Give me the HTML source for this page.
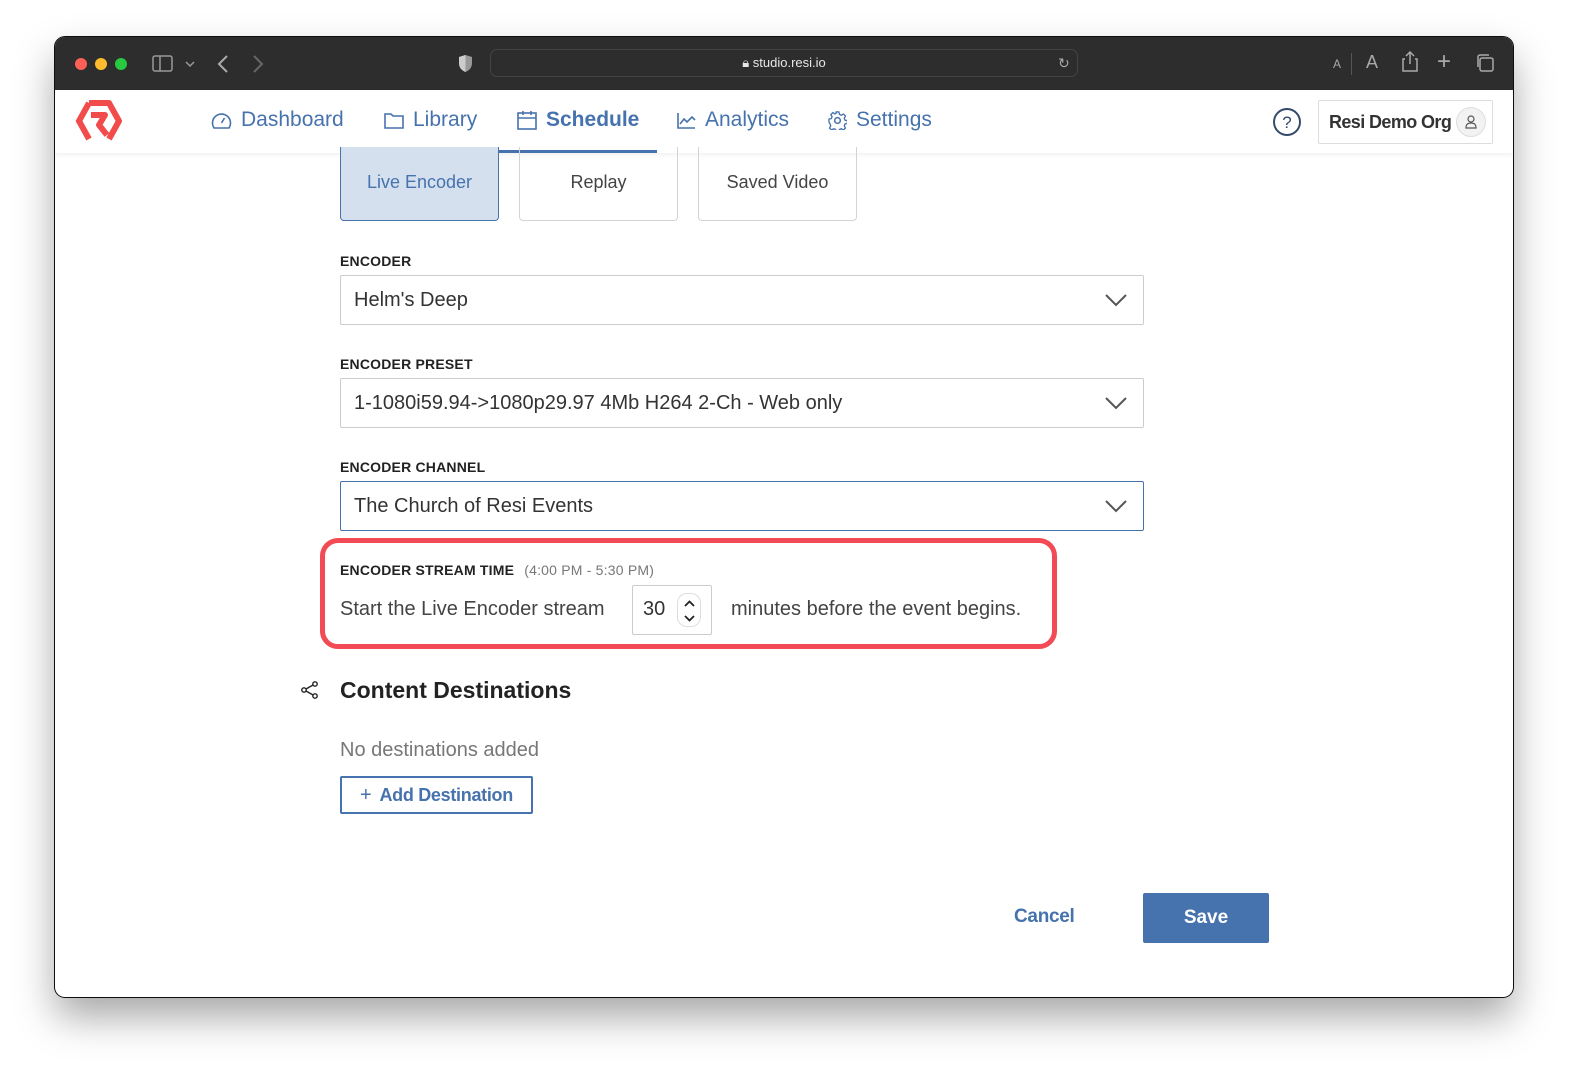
<!DOCTYPE html>
<html><head><meta charset="utf-8"><style>
*{box-sizing:border-box;margin:0;padding:0}
body{width:1580px;height:1078px;background:#fff;font-family:"Liberation Sans",sans-serif;position:relative;overflow:hidden}
.win{position:absolute;left:55px;top:37px;width:1458px;height:960px;border-radius:10px;background:#fff;overflow:hidden;box-shadow:0 20px 40px rgba(0,0,0,.35),0 0 0 1px #111}
.tb{position:absolute;left:0;top:0;width:100%;height:53px;background:#2d2d2d}
.a{position:absolute}
.dot{position:absolute;top:21px;width:12px;height:12px;border-radius:50%}
.url{position:absolute;left:435px;top:12px;width:588px;height:28px;border:1px solid #444;border-radius:7px;background:#2d2d2d;color:#e8e8e8;font-size:13px;text-align:center;line-height:26px}
.nav{position:absolute;left:0;top:53px;width:100%;height:63px;background:#fff;box-shadow:0 2px 4px rgba(0,0,0,.06)}
.ni{position:absolute;top:18px;font-size:21px;color:#4672ad;display:flex;align-items:center;gap:9px}
.lbl{position:absolute;font-size:14px;font-weight:bold;color:#222;letter-spacing:.2px}
.sel{position:absolute;left:285px;width:804px;height:50px;border:1px solid #ccc;border-radius:2px;font-size:20px;color:#333;padding-left:13px;line-height:48px}
.chev{position:absolute;right:16px;top:17px}
.tab{position:absolute;top:110px;width:159px;height:74px;border:1px solid #d3d3d3;border-top:none;border-radius:0 0 4px 4px;font-size:18px;color:#444;text-align:center;padding-top:25px}
</style></head><body>
<div class="win">
<div class="tb">
<div class="dot" style="left:20px;background:#fe5f57"></div>
<div class="dot" style="left:40px;background:#febc2e"></div>
<div class="dot" style="left:60px;background:#28c840"></div>
<svg class="a" style="left:97px;top:18px" width="22" height="18"><rect x="1" y="1" width="19" height="15" rx="2" fill="none" stroke="#999" stroke-width="1.5"/><line x1="8" y1="1" x2="8" y2="16" stroke="#999" stroke-width="1.5"/></svg>
<svg class="a" style="left:130px;top:24px" width="10" height="7"><path d="M1 1l4 4 4-4" stroke="#999" fill="none" stroke-width="1.5"/></svg>
<svg class="a" style="left:162px;top:17px" width="12" height="20"><path d="M10 2L2 10l8 8" stroke="#aaa" fill="none" stroke-width="2"/></svg>
<svg class="a" style="left:197px;top:17px" width="12" height="20"><path d="M2 2l8 8-8 8" stroke="#666" fill="none" stroke-width="2"/></svg>
<svg class="a" style="left:403px;top:17px" width="15" height="19"><path d="M7.5 1L14 3v6c0 5-3 7.5-6.5 9C4 16.5 1 14 1 9V3z" fill="#999"/><path d="M7.5 1v17C4 16.5 1 14 1 9V3z" fill="#ccc"/></svg>
<div class="url">🔒&#xFE0E; studio.resi.io</div>
<div class="a" style="left:1003px;top:18px;color:#aaa;font-size:14px">↻</div>
<div class="a" style="left:1278px;top:20px;color:#aaa;font-size:12px">A</div>
<div class="a" style="left:1296px;top:16px;width:1px;height:22px;background:#555"></div>
<div class="a" style="left:1311px;top:15px;color:#aaa;font-size:18px">A</div>
<svg class="a" style="left:1346px;top:14px" width="18" height="22"><path d="M4 8H2v12h14V8h-2M9 1v12M5 5l4-4 4 4" stroke="#aaa" fill="none" stroke-width="1.5"/></svg>
<div class="a" style="left:1382px;top:11px;color:#aaa;font-size:24px;font-weight:300">+</div>
<svg class="a" style="left:1420px;top:16px" width="20" height="20"><rect x="5" y="5" width="13" height="13" rx="2" fill="none" stroke="#aaa" stroke-width="1.5"/><path d="M3 14V4a2 2 0 0 1 2-2h9" stroke="#aaa" fill="none" stroke-width="1.5"/></svg>
</div>
<div class="nav">
<svg class="a" style="left:20px;top:9px" width="48" height="44" viewBox="0 0 48 44"><path d="M14 4h20l10 18-10 18" stroke="#f24b4b" stroke-width="6" fill="none" stroke-linejoin="round"/><path d="M14 4L4 22l10 18" stroke="#f24b4b" stroke-width="6" fill="none"/><path d="M16 16h14l-6 10 8 10" stroke="#f24b4b" stroke-width="6" fill="none" stroke-linejoin="round"/></svg>
<div class="ni" style="left:156px"><svg width="21" height="19" viewBox="0 0 21 19"><path d="M3 17A9 9 0 1 1 18 17z" fill="none" stroke="#4672ad" stroke-width="1.6"/><path d="M10.5 12l3-5" stroke="#4672ad" stroke-width="1.6"/></svg>Dashboard</div>
<div class="ni" style="left:329px"><svg width="20" height="17"><path d="M1 2h6l2 2h10v12H1z" fill="none" stroke="#4672ad" stroke-width="1.6"/></svg>Library</div>
<div class="ni" style="left:462px;font-weight:bold"><svg width="20" height="20"><rect x="1" y="3" width="18" height="16" fill="none" stroke="#4672ad" stroke-width="1.6"/><path d="M1 8h18M6 1v4M14 1v4" stroke="#4672ad" stroke-width="1.6"/></svg>Schedule</div>
<div class="a" style="left:443px;top:60px;width:159px;height:3px;background:#4672ad"></div>
<div class="ni" style="left:622px"><svg width="19" height="17"><path d="M1 1v15h17M3 12l4-5 3 3 5-5 3 3" fill="none" stroke="#4672ad" stroke-width="1.6"/></svg>Analytics</div>
<div class="ni" style="left:773px"><svg width="19" height="19" viewBox="0 0 20 20"><circle cx="10" cy="10" r="3" fill="none" stroke="#4672ad" stroke-width="1.6"/><path d="M8.5 1h3l.5 2.5 2 1 2.3-1.3 2.1 2.1-1.3 2.3.8 2 2.5.5v3l-2.5.5-.8 2 1.3 2.3-2.1 2.1-2.3-1.3-2 .8-.5 2.5h-3l-.5-2.5-2-.8-2.3 1.3-2.1-2.1 1.3-2.3-.8-2L1 11.5v-3l2.5-.5.8-2L3 3.8l2.1-2.1L7.4 3l1.1-.5z" fill="none" stroke="#4672ad" stroke-width="1.4"/></svg>Settings</div>
<svg class="a" style="left:1217px;top:17px" width="30" height="30"><circle cx="15" cy="15" r="13" fill="none" stroke="#33496b" stroke-width="2"/><text x="15" y="21" text-anchor="middle" font-size="17" fill="#33496b" font-family="Liberation Sans">?</text></svg>
<div class="a" style="left:1263px;top:10px;width:175px;height:44px;border:1px solid #ddd;border-radius:2px"><span class="a" style="left:10px;top:11px;font-size:18px;color:#333;font-weight:bold;letter-spacing:-.6px">Resi Demo Org</span><div class="a" style="left:137px;top:6px;width:30px;height:30px;border-radius:50%;background:#f2f2f2;border:1px solid #ddd"><svg class="a" style="left:8px;top:7px" width="12" height="14"><circle cx="6" cy="4" r="3" fill="none" stroke="#555" stroke-width="1.2"/><path d="M1 13c0-4 2-5 5-5s5 1 5 5z" fill="none" stroke="#555" stroke-width="1.2"/></svg></div></div>
</div>
<div class="tab" style="left:285px;background:#d4e0ee;border:1px solid #4672ad;border-top:none;color:#4672ad">Live Encoder</div>
<div class="tab" style="left:464px">Replay</div>
<div class="tab" style="left:643px">Saved Video</div>
<div class="lbl" style="left:285px;top:216px">ENCODER</div>
<div class="sel" style="top:238px">Helm's Deep<svg class="chev" width="22" height="14"><path d="M1 2l10 10 10-10" stroke="#555" fill="none" stroke-width="2"/></svg></div>
<div class="lbl" style="left:285px;top:319px">ENCODER PRESET</div>
<div class="sel" style="top:341px">1-1080i59.94-&gt;1080p29.97 4Mb H264 2-Ch - Web only<svg class="chev" width="22" height="14"><path d="M1 2l10 10 10-10" stroke="#555" fill="none" stroke-width="2"/></svg></div>
<div class="lbl" style="left:285px;top:422px">ENCODER CHANNEL</div>
<div class="sel" style="top:444px;border-color:#4672ad">The Church of Resi Events<svg class="chev" width="22" height="14"><path d="M1 2l10 10 10-10" stroke="#555" fill="none" stroke-width="2"/></svg></div>
<div class="a" style="left:265px;top:501px;width:737px;height:111px;border:5px solid #f24b55;border-radius:18px"></div>
<div class="lbl" style="left:285px;top:525px">ENCODER STREAM TIME <span style="font-weight:normal;color:#777;margin-left:6px">(4:00 PM - 5:30 PM)</span></div>
<div class="a" style="left:285px;top:561px;font-size:20px;color:#444">Start the Live Encoder stream</div>
<div class="a" style="left:577px;top:548px;width:80px;height:50px;border:1px solid #ccc;border-radius:2px"><span class="a" style="left:10px;top:12px;font-size:20px;color:#333">30</span><div class="a" style="left:44px;top:7px;width:24px;height:34px;border:1px solid #ddd;border-radius:10px"><svg class="a" style="left:5px;top:4px" width="13" height="26"><path d="M2 8l4.5-4.5L11 8M2 18l4.5 4.5L11 18" stroke="#222" fill="none" stroke-width="1.8"/></svg></div></div>
<div class="a" style="left:676px;top:561px;font-size:20px;color:#444">minutes before the event begins.</div>
<svg class="a" style="left:246px;top:644px" width="18" height="18"><circle cx="14" cy="3" r="2.2" fill="none" stroke="#222" stroke-width="1.4"/><circle cx="3" cy="9" r="2.2" fill="none" stroke="#222" stroke-width="1.4"/><circle cx="14" cy="15" r="2.2" fill="none" stroke="#222" stroke-width="1.4"/><path d="M5 8l7-4M5 10l7 4" stroke="#222" stroke-width="1.4"/></svg>
<div class="a" style="left:285px;top:640px;font-size:23px;font-weight:bold;color:#222">Content Destinations</div>
<div class="a" style="left:285px;top:702px;font-size:20px;color:#777">No destinations added</div>
<div class="a" style="left:285px;top:739px;width:193px;height:38px;border:2px solid #4672ad;border-radius:2px;color:#4672ad;font-size:18px;font-weight:bold;text-align:center;line-height:34px;letter-spacing:-.3px"><span style="font-weight:normal;font-size:20px;margin-right:8px">+</span>Add Destination</div>
<div class="a" style="left:959px;top:869px;font-size:19px;font-weight:bold;color:#4672ad;letter-spacing:-.3px">Cancel</div>
<div class="a" style="left:1088px;top:856px;width:126px;height:50px;background:#4672ad;border-radius:2px;color:#fff;font-size:19px;font-weight:bold;text-align:center;line-height:50px">Save</div>
</div>
</body></html>
